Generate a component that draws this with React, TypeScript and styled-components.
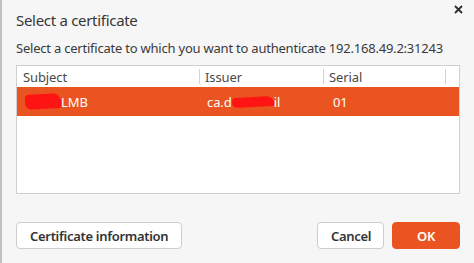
import styled, { createGlobalStyle } from "styled-components"

const Global = createGlobalStyle`
  html, body {
    margin: 0;
    padding: 0;
    background: #f6f6f6;
  }
  * { box-sizing: border-box; }
`

const Dialog = styled.div`
  position: relative;
  width: 474px;
  height: 263px;
  background: #f6f6f6;
  border-left: 2px solid #c2c2c2;
  font-family: "Noto Sans", "Open Sans", sans-serif;
  color: #3c3c3c;
  display: flex;
  flex-direction: column;
  padding: 9px 14px 0 14px;
  overflow: hidden;
`

const Close = styled.div`
  position: absolute;
  top: 3px;
  right: 9px;
  width: 14px;
  height: 12px;
  display: flex;
  align-items: center;
  justify-content: center;
  cursor: pointer;
`

const Title = styled.div`
  font-size: 15px;
  line-height: 22px;
  letter-spacing: -0.3px;
  color: #363636;
`

const Subtitle = styled.div`
  margin-top: 9px;
  font-size: 13px;
  line-height: 17px;
  letter-spacing: -0.22px;
  color: #3a3a3a;
  white-space: nowrap;
`

const Table = styled.div`
  margin-top: 8px;
  height: 129px;
  background: #fff;
  border: 1px solid #cfcfcf;
`

const Row = styled.div<{ $selected?: boolean }>`
  display: grid;
  grid-template-columns: 182px 124px 122px 1fr;
  height: ${({ $selected }) => ($selected ? "29px" : "21px")};
  align-items: center;
  background: ${({ $selected }) => ($selected ? "#e95420" : "transparent")};
  color: ${({ $selected }) => ($selected ? "#fff" : "#4a4a4a")};
  font-size: 13px;
  letter-spacing: -0.1px;
`

const HeadCell = styled.div<{ $divider?: boolean }>`
  position: relative;
  height: 100%;
  display: flex;
  align-items: center;
  padding-left: 6px;

  &::before {
    content: "";
    display: ${({ $divider }) => ($divider ? "block" : "none")};
    position: absolute;
    left: 0;
    top: 3px;
    bottom: 3px;
    width: 1px;
    background: #d4d4d4;
  }
`

const Cell = styled.div<{ $pad?: number }>`
  padding-left: ${({ $pad }) => $pad ?? 7}px;
  white-space: nowrap;
  display: flex;
  align-items: center;
`

const Redact = styled.span<{ $w: number; $h: number }>`
  display: inline-block;
  width: ${({ $w }) => $w}px;
  height: ${({ $h }) => $h}px;
  background: #ff1414;
  border-radius: 4px 8px 3px 6px;
  transform: rotate(-3deg);
`

const Footer = styled.div`
  margin-top: 28px;
  display: flex;
  align-items: center;
  gap: 8px;
`

const Button = styled.button<{ $primary?: boolean; $w?: number }>`
  height: 27px;
  width: ${({ $w }) => ($w ? `${$w}px` : "auto")};
  padding: 0 13px;
  border-radius: 4px;
  border: 1px solid ${({ $primary }) => ($primary ? "#e95420" : "#cdcdcd")};
  background: ${({ $primary }) => ($primary ? "#e95420" : "#fff")};
  color: ${({ $primary }) => ($primary ? "#fff" : "#333")};
  font-family: "Noto Sans", "Open Sans", sans-serif;
  font-size: 13px;
  font-weight: 600;
  letter-spacing: -0.3px;
`

const Spacer = styled.div`
  flex: 1;
`

export default function App() {
  return (
    <>
      <Global />
      <Dialog>
        <Close aria-label="Close">
          <svg width="9" height="9" viewBox="0 0 9 9">
            <path d="M1 1L8 8M8 1L1 8" stroke="#2e2e2e" strokeWidth="1.8" />
          </svg>
        </Close>
        <Title>Select a certificate</Title>
        <Subtitle>Select a certificate to which you want to authenticate 192.168.49.2:31243</Subtitle>
        <Table>
          <Row>
            <HeadCell>Subject</HeadCell>
            <HeadCell $divider>Issuer</HeadCell>
            <HeadCell $divider>Serial</HeadCell>
            <HeadCell $divider />
          </Row>
          <Row $selected>
            <Cell $pad={8}>
              <Redact $w={36} $h={15} aria-hidden />LMB
            </Cell>
            <Cell $pad={8}>
              ca.d<Redact $w={42} $h={10} aria-hidden />il
            </Cell>
            <Cell $pad={10}>01</Cell>
            <Cell />
          </Row>
        </Table>
        <Footer>
          <Button>Certificate information</Button>
          <Spacer />
          <Button $w={67}>Cancel</Button>
          <Button $primary $w={68}>OK</Button>
        </Footer>
      </Dialog>
    </>
  )
}
